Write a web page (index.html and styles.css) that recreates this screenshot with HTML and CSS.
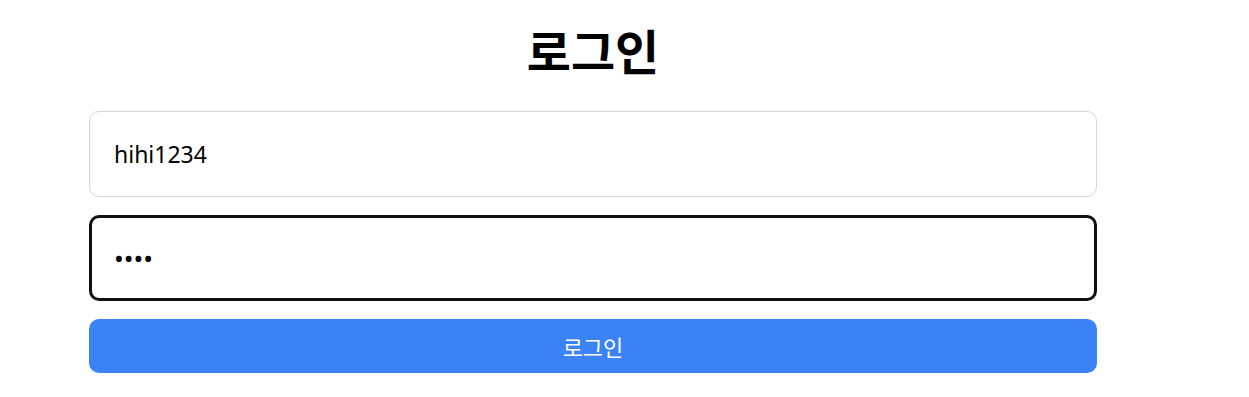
FILE: index.html
```html
<!DOCTYPE html>
<html lang="ko">
<head>
<meta charset="utf-8">
<link rel="stylesheet" href="styles.css">
</head>
<body>
<div class="page">
  <form class="login">
    <h1 class="title">로그인</h1>
    <input class="field" type="text" value="hihi1234">
    <input class="field field-focus" type="password" value="1234">
    <button class="submit" type="button">로그인</button>
  </form>
</div>
</body>
</html>
```
FILE: styles.css
```css
html, body {
  margin: 0;
  padding: 0;
  background: #ffffff;
}
.page {
  padding-left: 89px;
}
.login {
  width: 1008px;
  display: flex;
  flex-direction: column;
  gap: 18px;
  font-family: "Noto Sans", "Noto Sans CJK KR", sans-serif;
}
.title {
  margin: 18px 0 13px 0;
  text-align: center;
  font-family: "Noto Sans CJK KR", sans-serif;
  font-weight: 700;
  font-size: 48px;
  line-height: 62px;
  color: #000;
}
.field {
  box-sizing: border-box;
  height: 86px;
  width: 100%;
  margin: 0;
  padding: 0 24px;
  border: 1px solid #d4d4d8;
  border-radius: 10px;
  font-family: "Noto Sans", sans-serif;
  font-size: 23px;
  color: #000;
  background: #fff;
  outline: none;
}
.field-focus {
  border: 3px solid #111;
  padding: 0 22px;
  font-size: 26px;
}
.submit {
  height: 54px;
  width: 100%;
  margin: 0;
  border: none;
  border-radius: 10px;
  background: #3b82f6;
  color: #fff;
  font-family: "Noto Sans CJK KR", sans-serif;
  font-size: 22px;
  cursor: pointer;
}
```
